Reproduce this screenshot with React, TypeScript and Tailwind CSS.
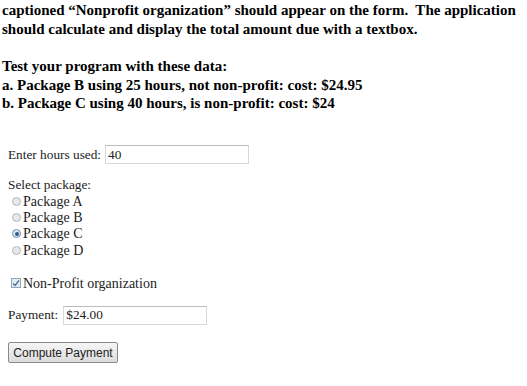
export default function App() {
  return (
    <div className="w-[527px] h-[386px] bg-white text-black overflow-hidden">
      <div className="pl-[2px] pt-[1px] font-['Liberation_Serif',serif] font-bold text-[15px] leading-[18.5px] whitespace-pre">
        <p>captioned “Nonprofit organization” should appear on the form.  The application</p>
        <p>should calculate and display the total amount due with a textbox.</p>
        <p className="mt-[19px]">Test your program with these data:</p>
        <p>a. Package B using 25 hours, not non-profit: cost: $24.95</p>
        <p>b. Package C using 40 hours, is non-profit: cost: $24</p>
      </div>

      <div className="pl-[8px] mt-[32px] font-['Liberation_Serif',serif] text-[13.3px] text-[#222]">
        <div className="flex items-center h-[20px]">
          <span>Enter hours used:</span>
          <input
            className="ml-[4px] w-[144px] h-[19px] border border-[#d8d8d8] border-t-[#bcbcbc] px-[2px] text-[13.3px] outline-none font-['Liberation_Serif',serif]"
            defaultValue="40"
          />
        </div>

        <div className="mt-[12px] leading-[16.5px]">Select package:</div>
        <div className="flex flex-col">
          {["A", "B", "C", "D"].map((p) => (
            <label key={p} className="flex items-center h-[16.3px] pl-[4px]">
              <span
                className={
                  "w-[9px] h-[9px] rounded-full border mr-[2px] flex items-center justify-center " +
                  (p === "C"
                    ? "border-[#6c8fb0] bg-[#dde8f3]"
                    : "border-[#b5b5b5] bg-[#e8e8e8]")
                }
              >
                {p === "C" && <span className="w-[4px] h-[4px] rounded-full bg-[#2e5a86]" />}
              </span>
              <span className="text-[14px]">Package {p}</span>
            </label>
          ))}
        </div>

        <label className="flex items-center mt-[16px] h-[18px] pl-[3px]">
          <span className="w-[10px] h-[10px] border border-[#8fa6bd] bg-[#e4ecf4] mr-[2px] flex items-center justify-center">
            <svg width="8" height="8" viewBox="0 0 8 8">
              <path d="M1 4.5 L3 6.5 L7 1.5" stroke="#4d6e91" strokeWidth="1.3" fill="none" />
            </svg>
          </span>
          <span className="text-[14px]">Non-Profit organization</span>
        </label>

        <div className="flex items-center mt-[13px] h-[20px]">
          <span>Payment:</span>
          <input
            className="ml-[5px] w-[144px] h-[19px] border border-[#d8d8d8] border-t-[#bcbcbc] px-[2px] text-[13.3px] outline-none font-['Liberation_Serif',serif]"
            defaultValue="$24.00"
          />
        </div>

        <button className="mt-[17px] h-[21px] w-[110px] border border-[#8a8a8a] rounded-[2px] bg-gradient-to-b from-[#f6f6f6] to-[#dcdcdc] font-['Liberation_Sans',sans-serif] text-[12px] text-[#222]">
          Compute Payment
        </button>
      </div>
    </div>
  )
}
